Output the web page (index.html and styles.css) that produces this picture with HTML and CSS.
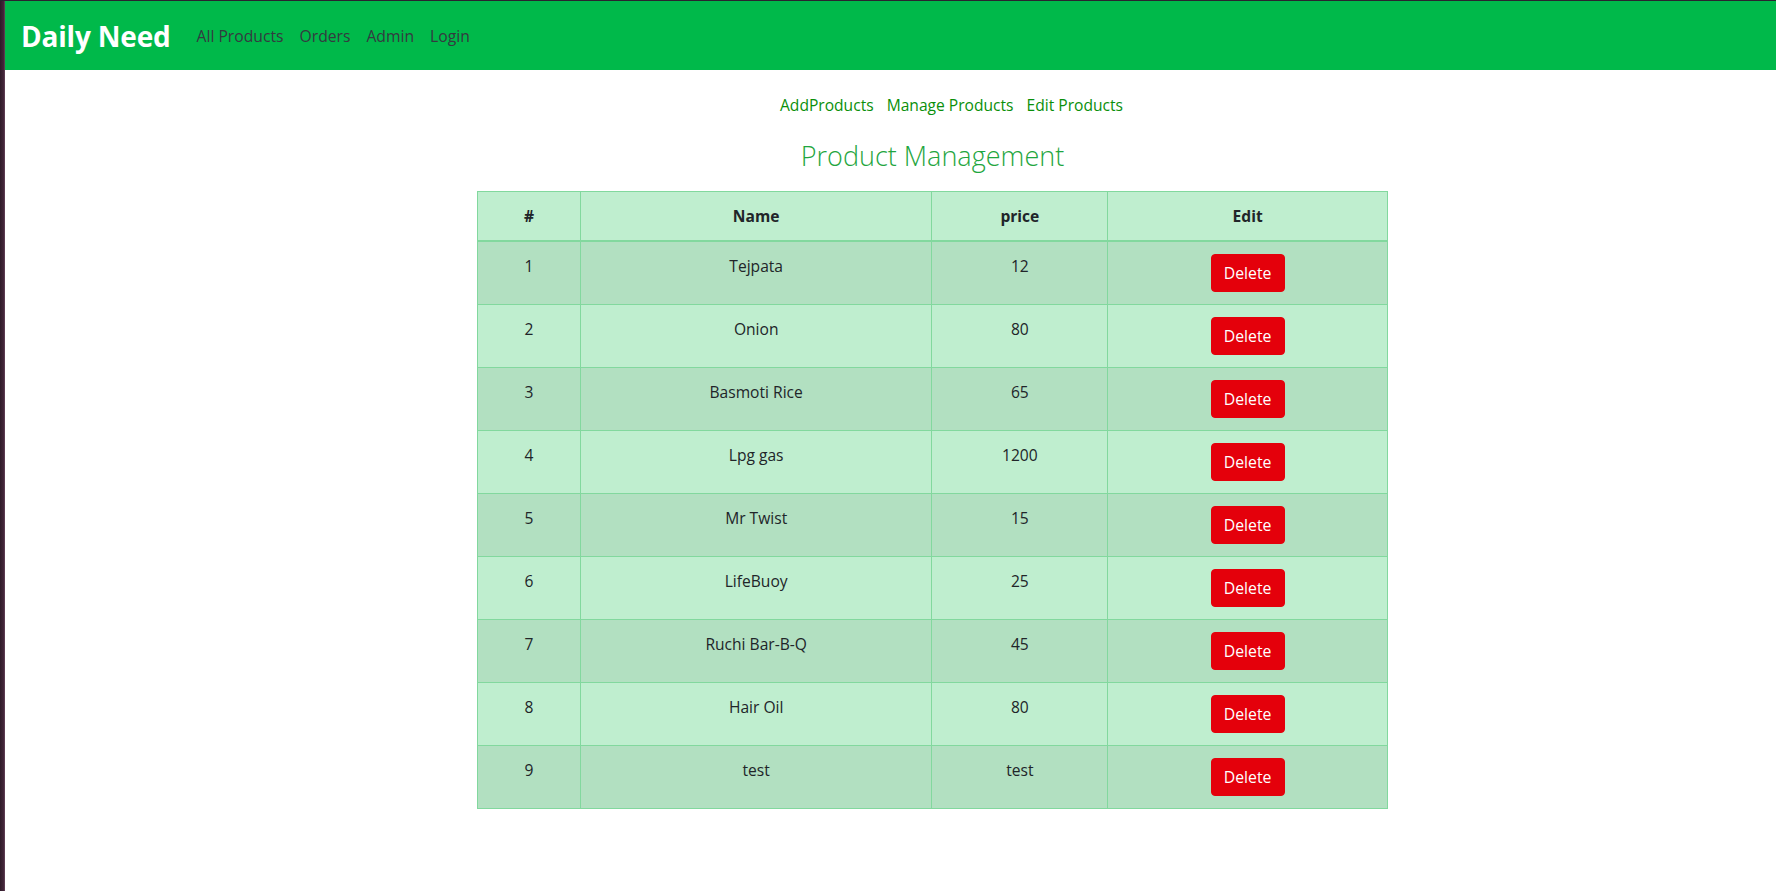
FILE: index.html
```html
<!DOCTYPE html>
<html lang="en">
<head>
<meta charset="utf-8">
<title>Daily Need - Product Management</title>
<link rel="stylesheet" href="styles.css">
</head>
<body>
<div class="frame-edge"></div>
<div class="page">
  <nav class="navbar">
    <a class="brand" href="#">Daily Need</a>
    <ul class="nav-links">
      <li><a href="#">All Products</a></li>
      <li><a href="#">Orders</a></li>
      <li><a href="#">Admin</a></li>
      <li><a href="#">Login</a></li>
    </ul>
  </nav>
  <main class="content">
    <div class="subnav">
      <a href="#">AddProducts</a>
      <a href="#">Manage Products</a>
      <a href="#">Edit Products</a>
    </div>
    <h3 class="title">Product Management</h3>
    <table class="products">
      <colgroup>
        <col class="c-num">
        <col class="c-name">
        <col class="c-price">
        <col class="c-edit">
      </colgroup>
      <thead>
        <tr><th>#</th><th>Name</th><th>price</th><th>Edit</th></tr>
      </thead>
      <tbody>
        <tr><td>1</td><td>Tejpata</td><td>12</td><td><button class="btn-delete">Delete</button></td></tr>
        <tr><td>2</td><td>Onion</td><td>80</td><td><button class="btn-delete">Delete</button></td></tr>
        <tr><td>3</td><td>Basmoti Rice</td><td>65</td><td><button class="btn-delete">Delete</button></td></tr>
        <tr><td>4</td><td>Lpg gas</td><td>1200</td><td><button class="btn-delete">Delete</button></td></tr>
        <tr><td>5</td><td>Mr Twist</td><td>15</td><td><button class="btn-delete">Delete</button></td></tr>
        <tr><td>6</td><td>LifeBuoy</td><td>25</td><td><button class="btn-delete">Delete</button></td></tr>
        <tr><td>7</td><td>Ruchi Bar-B-Q</td><td>45</td><td><button class="btn-delete">Delete</button></td></tr>
        <tr><td>8</td><td>Hair Oil</td><td>80</td><td><button class="btn-delete">Delete</button></td></tr>
        <tr><td>9</td><td>test</td><td>test</td><td><button class="btn-delete">Delete</button></td></tr>
      </tbody>
    </table>
  </main>
</div>
</body>
</html>
```

FILE: styles.css
```css
* { box-sizing: border-box; }

html, body { height: 100%; }

body {
  margin: 0;
  display: flex;
  border-top: 1px solid #2a2430;
  background: #ffffff;
  font-family: "Open Sans", "Noto Sans", sans-serif;
  font-size: 15.6px;
  line-height: 24px;
  color: #212529;
}

.frame-edge {
  flex: 0 0 5px;
  background: linear-gradient(to right, #2e1a28, #45283b);
  border-right: 1px solid #5b3a50;
}

.page {
  flex: 1 1 auto;
  min-width: 0;
}

.navbar {
  height: 69px;
  background: #00b94a;
  display: flex;
  align-items: center;
  padding-left: 16px;
}

.brand {
  color: #ffffff;
  font-weight: 700;
  font-size: 28px;
  text-decoration: none;
  margin-right: 26px;
  letter-spacing: -0.2px;
}

.nav-links {
  list-style: none;
  margin: 0;
  padding: 0;
  display: flex;
  gap: 16px;
}

.nav-links a {
  color: #343a40;
  text-decoration: none;
  font-size: 15.7px;
}

.content {
  padding-left: 84px;
  display: flex;
  flex-direction: column;
  align-items: center;
}

.subnav {
  margin-top: 23px;
  padding-left: 38px;
  display: flex;
  gap: 13px;
}

.subnav a {
  color: #0a8f0a;
  text-decoration: none;
}

.title {
  margin: 22px 0 0;
  font-size: 27px;
  font-weight: 300;
  line-height: 34px;
  color: #1fa640;
}

.products {
  margin-top: 18px;
  width: 911px;
  border-collapse: collapse;
  border: 1px solid #82d89e;
  background: #bfeecf;
  text-align: center;
}

.c-num { width: 103px; }
.c-name { width: 352px; }
.c-price { width: 176px; }
.c-edit { width: 280px; }

.products th,
.products td {
  border: 1px solid #82d89e;
  padding: 12px;
  vertical-align: top;
}

.products th {
  font-weight: 700;
  border-bottom-width: 2px;
}

.products tbody tr:nth-child(odd) {
  background: #b2e0c1;
}

.btn-delete {
  background: #e4000b;
  color: #ffffff;
  border: 1px solid #e4000b;
  border-radius: 4px;
  font-family: inherit;
  font-size: 15.8px;
  line-height: 24px;
  padding: 6px 12px;
  height: 38px;
  width: 74px;
  cursor: pointer;
}
```
